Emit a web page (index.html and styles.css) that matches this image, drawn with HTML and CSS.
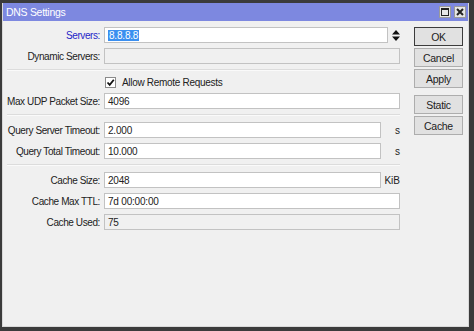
FILE: index.html
```html
<!DOCTYPE html>
<html>
<head>
    <title>DNS Settings</title>
    <link rel="stylesheet" href="styles.css">
</head>
<body>
<div class="window">
    <div class="titlebar">
        <span class="title">DNS Settings</span>
        <span class="tb-btn">
            <svg width="8" height="8" viewBox="0 0 8 8"><rect x="0.5" y="0.5" width="7" height="7" fill="none" stroke="#222" stroke-width="1"/><line x1="0" y1="1.5" x2="8" y2="1.5" stroke="#222" stroke-width="1"/></svg>
        </span>
        <span class="tb-btn">
            <svg width="8" height="8" viewBox="0 0 8 8"><path d="M1 1 L7 7 M7 1 L1 7" stroke="#222" stroke-width="2"/></svg>
        </span>
    </div>

    <div class="content">
        <div class="form">
            <div class="row">
                <label class="label active">Servers:</label>
                <div class="field">
                    <div class="input"><span class="selected">8.8.8.8</span></div>
                    <span class="spin">
                        <svg width="8" height="11" viewBox="0 0 8 11"><path d="M4 0 L8 4.5 L0 4.5 Z M0 6.5 L8 6.5 L4 11 Z" fill="#111"/></svg>
                    </span>
                </div>
            </div>
            <div class="row">
                <label class="label">Dynamic Servers:</label>
                <div class="input disabled"></div>
            </div>

            <div class="sep"></div>

            <div class="row check-row">
                <span></span>
                <div class="check">
                    <span class="box">
                        <svg width="9" height="9" viewBox="0 0 9 9"><path d="M1.5 4.5 L3.7 6.8 L7.8 1.8" fill="none" stroke="#111" stroke-width="1.8"/></svg>
                    </span>
                    Allow Remote Requests
                </div>
            </div>
            <div class="row">
                <label class="label">Max UDP Packet Size:</label>
                <div class="input">4096</div>
            </div>

            <div class="sep"></div>

            <div class="row">
                <label class="label">Query Server Timeout:</label>
                <div class="field">
                    <div class="input">2.000</div>
                    <span class="unit">s</span>
                </div>
            </div>
            <div class="row">
                <label class="label">Query Total Timeout:</label>
                <div class="field">
                    <div class="input">10.000</div>
                    <span class="unit">s</span>
                </div>
            </div>

            <div class="sep"></div>

            <div class="row">
                <label class="label">Cache Size:</label>
                <div class="field">
                    <div class="input">2048</div>
                    <span class="unit">KiB</span>
                </div>
            </div>
            <div class="row">
                <label class="label">Cache Max TTL:</label>
                <div class="input">7d 00:00:00</div>
            </div>
            <div class="row">
                <label class="label">Cache Used:</label>
                <div class="input disabled">75</div>
            </div>
        </div>

        <div class="buttons">
            <button class="button default">OK</button>
            <button class="button">Cancel</button>
            <button class="button">Apply</button>
            <button class="button gap">Static</button>
            <button class="button">Cache</button>
        </div>
    </div>
</div>
</body>
</html>
```

FILE: styles.css
```css
body {
    margin: 0;
    background-color: #3b3b3b;
    font-family: "Liberation Sans", Arial, sans-serif;
    font-size: 10px;
    color: #222;
}

.window {
    margin: 3px 0 0 2px;
    width: 465px;
    height: 323px;
    background-color: #f0f0f0;
    border: 1px solid #d9d9d9;
    border-top: none;
}

.titlebar {
    display: flex;
    align-items: center;
    height: 18px;
    padding: 0 2px 0 3px;
    background-color: #7d88e0;
    color: #fff;
}

.title {
    flex: 1;
    font-size: 10.5px;
    letter-spacing: -0.3px;
}

.tb-btn {
    display: flex;
    align-items: center;
    justify-content: center;
    width: 10px;
    height: 10px;
    margin-left: 3px;
    background-color: #e6e6e6;
    border: 1px solid #9a9a9a;
}

.content {
    display: flex;
    padding: 6px 0 0 0;
}

.form {
    width: 397px;
}

.row {
    display: grid;
    grid-template-columns: 97px 296px;
    column-gap: 4px;
    align-items: center;
    height: 16px;
    margin-bottom: 5px;
}

.label {
    text-align: right;
    white-space: nowrap;
    letter-spacing: -0.4px;
}

.label.active {
    color: #2626c8;
}

.field {
    display: flex;
    align-items: center;
    height: 16px;
}

.input {
    flex: 1;
    box-sizing: border-box;
    height: 16px;
    padding: 1px 0 0 3px;
    background-color: #fff;
    border: 1px solid #c2c2c2;
    line-height: 13px;
    letter-spacing: -0.2px;
    white-space: nowrap;
}

.input.disabled {
    background-color: #f0f0f0;
}

.selected {
    background-color: #3b8ff0;
    color: #fff;
    padding: 0 1px;
}

.spin {
    display: flex;
    justify-content: flex-end;
    width: 10px;
    margin-left: 2px;
}

.unit {
    width: 19px;
    text-align: right;
    font-size: 10px;
}

.sep {
    height: 1px;
    margin: 1px 0 6px 4px;
    background-color: #dcdcdc;
    border-bottom: 1px solid #fafafa;
}

.check-row {
    height: 11px;
}

.check {
    display: flex;
    align-items: center;
    letter-spacing: -0.3px;
}

.box {
    display: flex;
    align-items: center;
    justify-content: center;
    box-sizing: border-box;
    width: 11px;
    height: 11px;
    margin: 0 6px 0 1px;
    background-color: #fff;
    border: 1px solid #8a8a8a;
}

.buttons {
    display: flex;
    flex-direction: column;
    gap: 2px;
    margin-left: 14px;
}

.button {
    width: 49px;
    height: 19px;
    padding: 0;
    background-color: #e1e1e1;
    border: 1px solid #adadad;
    font-family: "Liberation Sans", Arial, sans-serif;
    font-size: 10.5px;
    color: #222;
    letter-spacing: -0.3px;
}

.button.default {
    border: 1px solid #3c3c3c;
}

.button.gap {
    margin-top: 5px;
}
```
